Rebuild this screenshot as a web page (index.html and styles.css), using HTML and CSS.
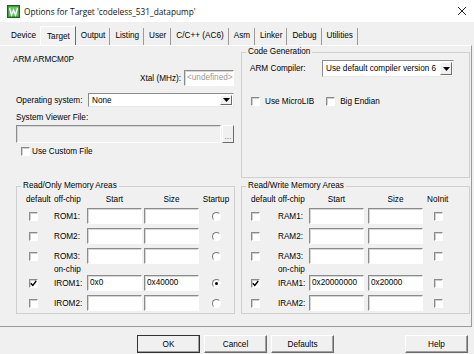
FILE: index.html
```html
<!DOCTYPE html>
<html lang="en">

<head>
  <meta charset="UTF-8">
  <title>Options for Target</title>
  <link rel="stylesheet" href="styles.css">
</head>

<body>
  <header class="titlebar">
    <svg class="app-icon" width="13" height="13" viewBox="0 0 13 13">
      <rect x="0.5" y="0.5" width="12" height="12" fill="#3f9e3f" stroke="#1f5f1f"/>
      <rect x="2" y="2" width="9" height="9" fill="#6cc36c"/>
      <polyline points="2.5,3 4.5,10 6.5,5 8.5,10 10.5,3" fill="none" stroke="#fff" stroke-width="1.3"/>
    </svg>
    <span class="title">Options for Target 'codeless_531_datapump'</span>
    <svg class="close" width="10" height="10" viewBox="0 0 10 10">
      <path d="M1 1 L9 9 M9 1 L1 9" stroke="#222" stroke-width="1"/>
    </svg>
  </header>

  <nav class="tabs">
    <span class="tab first">Device</span>
    <span class="tab active">Target</span>
    <span class="tab">Output</span>
    <span class="tab">Listing</span>
    <span class="tab">User</span>
    <span class="tab">C/C++ (AC6)</span>
    <span class="tab">Asm</span>
    <span class="tab">Linker</span>
    <span class="tab">Debug</span>
    <span class="tab">Utilities</span>
  </nav>

  <main class="panel">
    <section class="top">
      <div class="target-col">
        <p class="chip">ARM ARMCM0P</p>

        <div class="xtal">
          <span>Xtal (MHz):</span>
          <span class="edit xtal-edit">&lt;undefined&gt;</span>
        </div>

        <div class="os">
          <span class="os-label">Operating system:</span>
          <span class="combo">
            <span class="combo-text">None</span>
            <span class="combo-btn"><svg width="7" height="4" viewBox="0 0 7 4"><polygon points="0,0 7,0 3.5,4" fill="#000"/></svg></span>
          </span>
        </div>

        <p class="svd-label">System Viewer File:</p>
        <div class="svd">
          <span class="edit disabled"></span>
          <span class="browse">...</span>
        </div>

        <label class="check-row custom">
          <span class="checkbox"></span>
          <span>Use Custom File</span>
        </label>
      </div>

      <fieldset class="group codegen">
        <legend>Code Generation</legend>
        <div class="compiler">
          <span class="compiler-label">ARM Compiler:</span>
          <span class="combo compiler-combo">
            <span class="combo-text">Use default compiler version 6</span>
            <span class="combo-btn"><svg width="7" height="4" viewBox="0 0 7 4"><polygon points="0,0 7,0 3.5,4" fill="#000"/></svg></span>
          </span>
        </div>
        <div class="cg-checks">
          <label class="check-row">
            <span class="checkbox"></span>
            <span>Use MicroLIB</span>
          </label>
          <label class="check-row endian">
            <span class="checkbox"></span>
            <span>Big Endian</span>
          </label>
        </div>
      </fieldset>
    </section>

    <section class="memory">
      <fieldset class="group mem rom">
        <legend>Read/Only Memory Areas</legend>
        <div class="mem-row head">
          <span class="cell-head">default</span>
          <span class="cell-label">off-chip</span>
          <span class="cell-col">Start</span>
          <span class="cell-col">Size</span>
          <span class="cell-end">Startup</span>
        </div>
        <div class="mem-row">
          <span class="cell-cb"><span class="checkbox"></span></span>
          <span class="cell-label">ROM1:</span>
          <span class="edit"></span>
          <span class="edit"></span>
          <span class="cell-end"><span class="radio"></span></span>
        </div>
        <div class="mem-row">
          <span class="cell-cb"><span class="checkbox"></span></span>
          <span class="cell-label">ROM2:</span>
          <span class="edit"></span>
          <span class="edit"></span>
          <span class="cell-end"><span class="radio"></span></span>
        </div>
        <div class="mem-row">
          <span class="cell-cb"><span class="checkbox"></span></span>
          <span class="cell-label">ROM3:</span>
          <span class="edit"></span>
          <span class="edit"></span>
          <span class="cell-end"><span class="radio"></span></span>
        </div>
        <div class="mem-row sub">
          <span></span>
          <span class="cell-label">on-chip</span>
        </div>
        <div class="mem-row tight">
          <span class="cell-cb"><span class="checkbox checked"><svg width="7" height="7" viewBox="0 0 7 7"><polyline points="0.8,3.2 2.8,5.4 6.2,1" fill="none" stroke="#000" stroke-width="1.4"/></svg></span></span>
          <span class="cell-label">IROM1:</span>
          <span class="edit">0x0</span>
          <span class="edit">0x40000</span>
          <span class="cell-end"><span class="radio on"></span></span>
        </div>
        <div class="mem-row">
          <span class="cell-cb"><span class="checkbox"></span></span>
          <span class="cell-label">IROM2:</span>
          <span class="edit"></span>
          <span class="edit"></span>
          <span class="cell-end"><span class="radio"></span></span>
        </div>
      </fieldset>

      <fieldset class="group mem ram">
        <legend>Read/Write Memory Areas</legend>
        <div class="mem-row head">
          <span class="cell-head">default</span>
          <span class="cell-label">off-chip</span>
          <span class="cell-col">Start</span>
          <span class="cell-col">Size</span>
          <span class="cell-end">NoInit</span>
        </div>
        <div class="mem-row">
          <span class="cell-cb"><span class="checkbox"></span></span>
          <span class="cell-label">RAM1:</span>
          <span class="edit"></span>
          <span class="edit"></span>
          <span class="cell-end"><span class="checkbox"></span></span>
        </div>
        <div class="mem-row">
          <span class="cell-cb"><span class="checkbox"></span></span>
          <span class="cell-label">RAM2:</span>
          <span class="edit"></span>
          <span class="edit"></span>
          <span class="cell-end"><span class="checkbox"></span></span>
        </div>
        <div class="mem-row">
          <span class="cell-cb"><span class="checkbox"></span></span>
          <span class="cell-label">RAM3:</span>
          <span class="edit"></span>
          <span class="edit"></span>
          <span class="cell-end"><span class="checkbox"></span></span>
        </div>
        <div class="mem-row sub">
          <span></span>
          <span class="cell-label">on-chip</span>
        </div>
        <div class="mem-row tight">
          <span class="cell-cb"><span class="checkbox checked"><svg width="7" height="7" viewBox="0 0 7 7"><polyline points="0.8,3.2 2.8,5.4 6.2,1" fill="none" stroke="#000" stroke-width="1.4"/></svg></span></span>
          <span class="cell-label">IRAM1:</span>
          <span class="edit">0x20000000</span>
          <span class="edit">0x20000</span>
          <span class="cell-end"><span class="checkbox"></span></span>
        </div>
        <div class="mem-row">
          <span class="cell-cb"><span class="checkbox"></span></span>
          <span class="cell-label">IRAM2:</span>
          <span class="edit"></span>
          <span class="edit"></span>
          <span class="cell-end"><span class="checkbox"></span></span>
        </div>
      </fieldset>
    </section>
  </main>

  <footer class="buttons">
    <button class="default">OK</button>
    <button>Cancel</button>
    <button>Defaults</button>
    <button class="help">Help</button>
  </footer>
</body>

</html>
```

FILE: styles.css
```css
html {
  box-sizing: border-box;
}

*,
*:before,
*:after {
  box-sizing: inherit;
}

body {
  margin: 0;
  width: 474px;
  height: 354px;
  overflow: hidden;
  background: #f0f0f0;
  color: #000;
  font-family: "Liberation Sans", Arial, sans-serif;
  font-size: 8.2px;
}

p {
  margin: 0;
}

/* title bar */

.titlebar {
  display: flex;
  align-items: center;
  height: 22px;
  padding-left: 7px;
  background: #fff;
}

.app-icon {
  flex: none;
}

.title {
  margin-left: 4px;
  font-family: "Open Sans", sans-serif;
  font-size: 8.3px;
  color: #111;
}

.close {
  margin-left: auto;
  margin-right: 7px;
}

/* tabs */

.tabs {
  display: flex;
  height: 17px;
  margin-top: 6px;
  padding-left: 6px;
}

.tab {
  height: 17px;
  line-height: 16px;
  padding: 0 4px 0 5px;
  border-right: 1px solid #9a9a9a;
  white-space: nowrap;
}

.tab.first {
  border-right: none;
}

.tab.active {
  height: 19px;
  margin-top: -2px;
  padding: 0 5px 0 6px;
  line-height: 19px;
  border-left: 1px solid #fff;
  border-top: 1px solid #fff;
  border-right: 1px solid #6a6a6a;
  background: #f3f3f3;
}

/* tab page */

.panel {
  height: 282px;
  margin-right: 2px;
  border-top: 1px solid #fff;
  border-right: 1px solid #9a9a9a;
  border-bottom: 1px solid #9a9a9a;
}

.top {
  display: flex;
  height: 132px;
}

.target-col {
  width: 235px;
  padding-left: 16px;
  padding-right: 1px;
}

.chip {
  margin: 8px 0 0 -3px;
  line-height: 11px;
}

.xtal {
  display: flex;
  justify-content: flex-end;
  align-items: center;
  gap: 3px;
  height: 14px;
  margin-top: 6px;
}

.xtal-edit {
  width: 50px;
  height: 14px;
  color: #9a9a9a;
  background: #f0f0f0;
}

.os {
  display: flex;
  align-items: center;
  height: 14px;
  margin-top: 8px;
}

.os-label {
  width: 72px;
}

.svd-label {
  margin-top: 5px;
  line-height: 11px;
}

.svd {
  display: flex;
  height: 18px;
  margin-top: 2px;
}

.svd .edit {
  flex: 1;
  height: 18px;
}

.browse {
  width: 12px;
  margin-left: 1px;
  padding-top: 6px;
  text-align: center;
  line-height: 10px;
  color: #777;
  background: #f0f0f0;
  border: 1px solid;
  border-color: #fff #6a6a6a #6a6a6a #fff;
}

.check-row {
  display: flex;
  align-items: center;
  gap: 5px;
  height: 10px;
}

.custom {
  margin: 3px 0 0 5px;
  gap: 2px;
}

/* controls */

.edit {
  display: block;
  height: 16px;
  padding: 1px 0 0 2px;
  line-height: 11px;
  background: #fff;
  border: 1px solid;
  border-color: #8c8c8c #fff #fff #8c8c8c;
  box-shadow: inset 1px 1px 0 #d6d6d6;
  white-space: nowrap;
  overflow: hidden;
}

.edit.disabled {
  background: #f0f0f0;
}

.combo {
  display: flex;
  align-items: center;
  flex: 1;
  height: 14px;
  padding: 1px;
  background: #fff;
  border: 1px solid;
  border-color: #8c8c8c #e8e8e8 #e8e8e8 #8c8c8c;
}

.combo-text {
  flex: 1;
  padding-left: 2px;
  white-space: nowrap;
}

.combo-btn {
  display: flex;
  align-items: center;
  justify-content: center;
  width: 12px;
  height: 100%;
  background: #f0f0f0;
  border: 1px solid;
  border-color: #fff #6a6a6a #6a6a6a #fff;
}

.checkbox {
  display: inline-flex;
  align-items: center;
  justify-content: center;
  flex: none;
  width: 9px;
  height: 9px;
  background: #fff;
  border: 1px solid;
  border-color: #8a8a8a #fff #fff #8a8a8a;
  box-shadow: inset 1px 1px 0 #cfcfcf;
}

.radio {
  display: inline-flex;
  align-items: center;
  justify-content: center;
  width: 9px;
  height: 9px;
  border-radius: 50%;
  background: #fff;
  border: 1px solid;
  border-color: #7a7a7a #fff #fff #7a7a7a;
}

.radio.on::after {
  content: "";
  width: 3px;
  height: 3px;
  border-radius: 50%;
  background: #000;
}

/* group boxes */

.group {
  margin: 0;
  padding: 0;
  border: 1px solid #cfcfcf;
}

.group legend {
  margin-left: 4px;
  padding: 0 2px;
  line-height: 10px;
}

.codegen {
  width: 229px;
  height: 131px;
  margin: 1px 0 0 6px;
}

.compiler {
  display: flex;
  align-items: center;
  height: 17px;
  margin-top: 3px;
  padding-left: 8px;
}

.compiler-label {
  width: 72px;
}

.compiler-combo {
  flex: none;
  width: 132px;
  height: 17px;
}

.cg-checks {
  display: flex;
  margin-top: 19px;
  padding-left: 9px;
}

.endian {
  margin-left: 12px;
}

/* memory areas */

.memory {
  display: flex;
  margin-top: 3px;
}

.mem {
  height: 133px;
}

.rom {
  width: 219px;
  margin-left: 16px;
}

.ram {
  width: 229px;
  margin-left: 6px;
}

.mem-row {
  display: grid;
  align-items: center;
  height: 16px;
  margin-top: 4px;
}

.rom .mem-row {
  grid-template-columns: 35px 35px 57px 55px 34px;
}

.ram .mem-row {
  grid-template-columns: 35px 32px 59px 55px 45px;
}

.mem-row .edit {
  width: 55px;
}

.mem-row.head {
  height: 12px;
  margin-top: 2px;
}

.mem-row.head + .mem-row {
  margin-top: 3px;
}

.mem-row.sub {
  height: 10px;
  margin-top: 0;
}

.mem-row.tight {
  margin-top: 1px;
}

.cell-head {
  padding-left: 9px;
}

.cell-label {
  padding-left: 2px;
  white-space: nowrap;
}

.ram .cell-label {
  padding-left: 1px;
}

.cell-col {
  width: 55px;
  text-align: center;
}

.cell-cb {
  display: flex;
  padding-left: 12px;
}

.ram .cell-cb {
  padding-left: 9px;
}

.cell-end {
  display: flex;
  justify-content: center;
}

.ram .cell-end {
  justify-content: flex-start;
  padding-left: 11px;
}

.ram .head .cell-end {
  padding-left: 4px;
}

/* dialog buttons */

.buttons {
  display: flex;
  gap: 4px;
  margin-top: 8px;
  padding: 0 6px 0 137px;
}

button {
  width: 63px;
  height: 18px;
  padding: 0;
  font-family: inherit;
  font-size: inherit;
  color: #000;
  background: #f0f0f0;
  border: 1px solid;
  border-color: #fff #6a6a6a #6a6a6a #fff;
  box-shadow: inset -1px -1px 0 #a0a0a0;
}

button.default {
  outline: 1px solid #333;
  outline-offset: -1px;
}

button.help {
  margin-left: auto;
}
```
